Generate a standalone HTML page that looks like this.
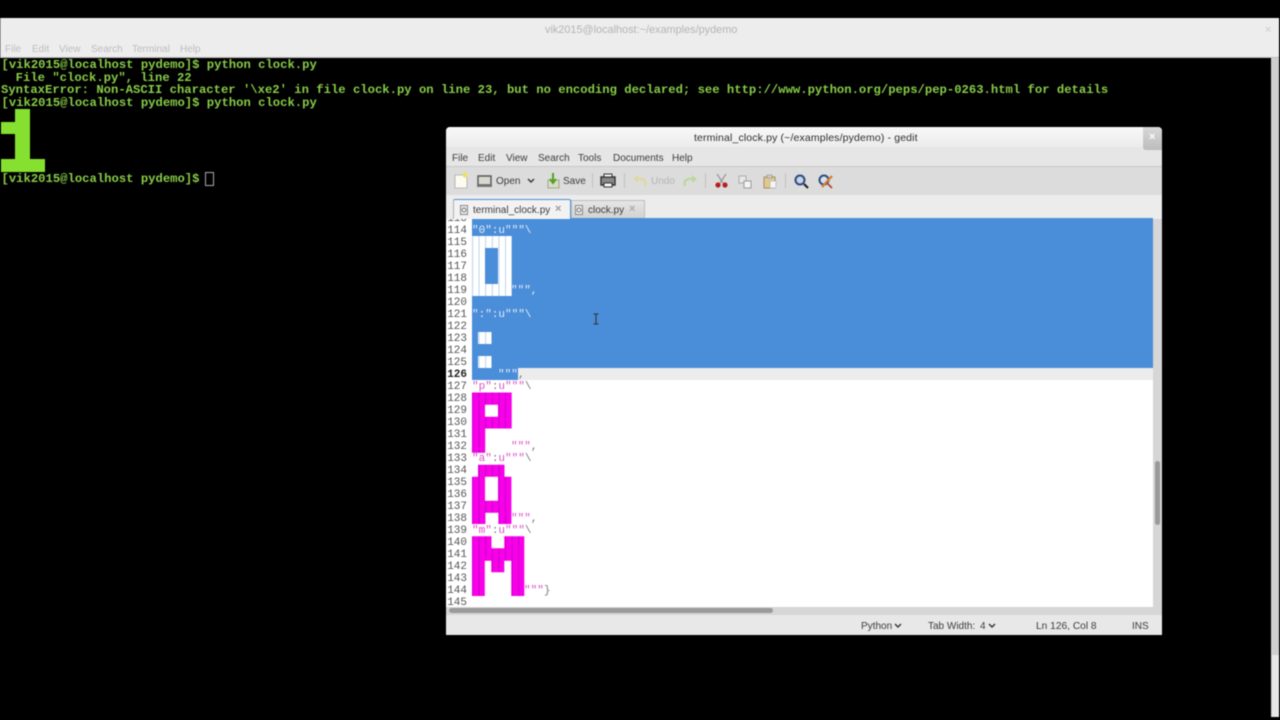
<!DOCTYPE html>
<html><head><meta charset="utf-8"><style>
html,body{margin:0;padding:0;background:#000;width:1280px;height:720px;overflow:hidden}
#r{position:relative;width:1280px;height:720px;overflow:hidden;filter:blur(.45px)}
.a{position:absolute}
.t{position:absolute;white-space:pre;font:bold 12.22px/13px "Liberation Mono",monospace;color:#88cc48;left:1px}
.s{position:absolute;white-space:pre;font:10px/14px "Liberation Sans",sans-serif;color:#3c3c3c}
.n{position:absolute;left:446px;width:21px;text-align:right;font:11px/12px "Liberation Mono",monospace;color:#555}
.c{position:absolute;white-space:pre;font:11px/12px "Liberation Mono",monospace;color:#dc50c8}
.w{color:#e4eefa}.g{color:#777}
</style></head><body><div id="r">
<div class="a" style="left:0;top:18px;width:1279px;height:39px;background:#ededed;border-left:1px solid #ccc;box-sizing:border-box"></div>
<div class="a" style="left:1271px;top:57px;width:8px;height:660px;background:#cfcfcf"></div>
<div class="a" style="left:1272px;top:655px;width:7px;height:62px;background:#e8e8e8"></div>
<div class="a" style="left:0;top:57px;width:1279px;height:1px;background:#bbb"></div>
<div class="s" style="left:545px;top:23px;color:#b4b4b4;font-size:10.9px">vik2015@localhost:~/examples/pydemo</div>
<div class="s" style="left:1265px;top:23px;color:#d4d4d4;font-weight:bold;font-size:11px">×</div>
<div class="s" style="left:5px;top:43px;color:#bdbdbd">File</div>
<div class="s" style="left:32px;top:43px;color:#bdbdbd">Edit</div>
<div class="s" style="left:59px;top:43px;color:#bdbdbd">View</div>
<div class="s" style="left:91px;top:43px;color:#bdbdbd">Search</div>
<div class="s" style="left:132px;top:43px;color:#bdbdbd">Terminal</div>
<div class="s" style="left:180px;top:43px;color:#bdbdbd">Help</div>

<div class="t" style="left:1.5px;top:59px">[vik2015@localhost pydemo]$ python clock.py</div>
<div class="t" style="top:72px">  File "clock.py", line 22</div>
<div class="t" style="top:84px">SyntaxError: Non-ASCII character '\xe2' in file clock.py on line 23, but no encoding declared; see http://www.python.org/peps/pep-0263.html for details</div>
<div class="t" style="left:1.5px;top:97px">[vik2015@localhost pydemo]$ python clock.py</div>
<div class="t" style="left:1.5px;top:173px">[vik2015@localhost pydemo]$</div>
<div class="a" style="left:15px;top:109px;width:15px;height:63px;background:#85e030"></div>
<div class="a" style="left:1px;top:122px;width:14px;height:12px;background:#85e030"></div>
<div class="a" style="left:1px;top:159px;width:44px;height:13px;background:#85e030"></div>
<div class="a" style="left:205px;top:172px;width:7px;height:12px;border:1px solid #aaa"></div>

<!-- gedit window -->
<div class="a" style="left:446px;top:127px;width:716px;height:508px;background:#e8e8e8;border-radius:4px 4px 0 0;overflow:hidden">
 <div class="a" style="left:0;top:0;width:716px;height:20px;background:linear-gradient(#f8f8f8,#ececec)"></div>
 <div class="a" style="left:0;top:20px;width:716px;height:19px;background:#e6e6e6"></div>
 <div class="a" style="left:0;top:39px;width:716px;height:29px;background:#dcdcdc;border-top:1px solid #c8c8c8;box-sizing:border-box"></div>
 <div class="a" style="left:0;top:68px;width:716px;height:24px;background:#ececec"></div>
 <div class="a" style="left:697px;top:0;width:19px;height:23px;background:linear-gradient(#d8d8d8,#bcbcbc);border-radius:0 4px 0 3px"></div>
 <div class="a" style="left:0;top:480px;width:716px;height:8px;background:#d6d6d6"></div>
 <div class="a" style="left:3px;top:481px;width:324px;height:5px;background:#9a9a9a;border-radius:3px"></div>
 <div class="a" style="left:707px;top:92px;width:9px;height:396px;background:#d6d6d6"></div>
 <div class="a" style="left:709px;top:334px;width:5px;height:64px;background:#9a9a9a;border-radius:3px"></div>
 <div class="a" style="left:0;top:488px;width:716px;height:20px;background:#e8e8e8"></div>
</div>
<div class="a" style="left:1149px;top:131px;font:bold 11px/12px 'Liberation Sans',sans-serif;color:#fff">×</div>
<div class="s" style="left:694px;top:131px;font-size:10.5px;color:#2e2e2e;letter-spacing:.14px">terminal_clock.py (~/examples/pydemo) - gedit</div>
<div class="s" style="left:452px;top:151.5px">File</div>
<div class="s" style="left:478px;top:151.5px">Edit</div>
<div class="s" style="left:506px;top:151.5px">View</div>
<div class="s" style="left:538px;top:151.5px">Search</div>
<div class="s" style="left:578px;top:151.5px">Tools</div>
<div class="s" style="left:613px;top:151.5px">Documents</div>
<div class="s" style="left:672px;top:151.5px">Help</div>

<!-- toolbar -->
<div class="s" style="left:496px;top:175px">Open</div>
<div class="s" style="left:563px;top:175px">Save</div>
<div class="s" style="left:651px;top:175px;color:#b5b5b5">Undo</div>
<svg class="a" style="left:446px;top:166px" width="400" height="30" viewBox="446 166 400 30">
 <path d="M455 175h9l3 3v10h-12z" fill="#fbfbf0" stroke="#aaa" stroke-width=".8"/><circle cx="465" cy="175" r="2.5" fill="#f0e060"/>
 <path d="M478 176h13v9h-13z" fill="#d8d8d0" stroke="#555" stroke-width="1.4"/><path d="M477 185h15v2h-15z" fill="#777"/>
 <path d="M528 179l3 3 3-3" fill="none" stroke="#333" stroke-width="1.4"/>
 <path d="M548 180h11v8h-11z" fill="#d8dcc8" stroke="#8a9a70" stroke-width=".8"/><path d="M553 173v9M550 179l3 4 3-4" fill="none" stroke="#55a020" stroke-width="2"/>
 <path d="M592.500 173v15M624.500 173v15M705.500 173v15M785.500 173v15" stroke="#c0c0c0"/>
 <path d="M601 177h14v8h-14z" fill="#888" stroke="#333" stroke-width="1.4"/><path d="M604 174h8v3h-8zM604 183h8v4h-8z" fill="#f4f4f4" stroke="#333"/>
 <path d="M645 186c2-6-3-8-8-7" fill="none" stroke="#e0d8a0" stroke-width="2.4"/><path d="M638 175l-5 4 5 4z" fill="#e0d8a0"/>
 <path d="M685 186c-2-6 3-8 8-7" fill="none" stroke="#bcd8a0" stroke-width="2.4"/><path d="M692 175l5 4-5 4z" fill="#bcd8a0"/>
 <path d="M717 174l6 9M726 174l-6 9" stroke="#999" stroke-width="1.3"/><circle cx="718" cy="185" r="2.600" fill="#b82020"/><circle cx="725" cy="185" r="2.600" fill="#b82020"/>
 <path d="M739 176h7v7h-7z" fill="#e8e8e8" stroke="#aaa"/><path d="M744 181h7v7h-7z" fill="#f4f4f4" stroke="#999"/>
 <path d="M764 177h11v11h-11z" fill="#e0c890" stroke="#a89060"/><path d="M767 175h5v3h-5z" fill="#ccc" stroke="#888" stroke-width=".6"/><path d="M770 181h6v7h-6z" fill="#f4f4f4" stroke="#aaa" stroke-width=".6"/>
 <circle cx="800" cy="180" r="4.500" fill="#c8d4e8" stroke="#2c4a80" stroke-width="2"/><path d="M804 184l4 4" stroke="#222" stroke-width="2.2"/>
 <circle cx="824" cy="180" r="4.500" fill="#d8e0ec" stroke="#2c4a80" stroke-width="2"/><path d="M822 187l10-11" stroke="#d88030" stroke-width="2.400"/><path d="M828 184l4 4" stroke="#b04020" stroke-width="1.600"/>
</svg>

<!-- tabs -->
<div class="a" style="left:571px;top:200px;width:74px;height:18px;background:linear-gradient(#e6e6e6,#d2d2d2);border:1px solid #bdbdbd;border-bottom:0;box-sizing:border-box"></div>
<div class="a" style="left:453px;top:199px;width:118px;height:20px;background:#f2f2f2;border-top:1px solid #4a90d9;border-left:1px solid #b0b0b0;border-right:1px solid #4a90d9;box-sizing:border-box;border-radius:2px 2px 0 0"></div>
<svg class="a" style="left:459px;top:204px" width="130" height="13" viewBox="459 203 130 13">
 <path d="M460.500 204.500h7v9h-7zM575.500 204.500h7v9h-7z" fill="#eee" stroke="#888"/><circle cx="464" cy="209" r="2" fill="none" stroke="#777"/><circle cx="579" cy="209" r="2" fill="none" stroke="#777"/>
</svg>
<div class="s" style="left:473px;top:204px">terminal_clock.py</div>
<div class="s" style="left:588px;top:204px">clock.py</div>
<div class="s" style="left:555px;top:202px;color:#999;font-weight:bold;font-size:11px">×</div>
<div class="s" style="left:629px;top:202px;color:#aaa;font-weight:bold;font-size:11px">×</div>

<!-- editor -->
<div class="a" style="left:446px;top:219px;width:707px;height:388px;background:#fff;overflow:hidden"></div>
<div class="a" style="left:571px;top:218px;width:582px;height:1px;background:#4a90d9"></div>
<div class="a" style="left:472px;top:219px;width:681px;height:149px;background:#4a8dd8"></div>
<div class="a" style="left:472px;top:368px;width:46px;height:12px;background:#4a8dd8"></div>
<div class="a" style="left:518px;top:368px;width:635px;height:12px;background:#ececec"></div>

<svg class="a" style="left:0;top:0" width="1280" height="720">
 <defs>
  <pattern id="m" width="6.62" height="12" patternUnits="userSpaceOnUse" x="472" y="0"><rect width="6.62" height="12" fill="#f800e8"/><rect width=".9" height="12" fill="#c400c8"/></pattern>
  <pattern id="k" width="6.62" height="12" patternUnits="userSpaceOnUse" x="472" y="0"><rect width="6.62" height="12" fill="#fff"/><rect width=".9" height="12" fill="#b4d0ee"/></pattern>
 </defs>
 <path fill="url(#k)" fill-rule="evenodd" d="M472 236h39.700v60H472zM485 248v36h13v-36z"/>
 <path fill="url(#k)" d="M478 332h13.500v12H478zM478 356h13.500v12H478z"/>
 <path fill="url(#m)" fill-rule="evenodd" d="M472 392.500h39.700v36h-26.500v24.300H472zM485 404.700v12h13v-12z"/>
 <path fill="url(#m)" d="M478 464.700h26.500v12h6.900v47.300h-13v-11.300h-13v11.300H472v-47.300h6zM485 476.700v24h13v-24z" fill-rule="evenodd"/>
 <path fill="url(#m)" d="M472 536.300h19.500v12h12.800v-12h20v59.700h-13v-35.300h-7v11.500h-13v-11.500h-6.500v35.300H472z"/>
 <path d="M593.500 314h2.500M598.500 314h-2.500M596 314v10M593.500 324h2.500M598.500 324h-2.500" stroke="#333" fill="none" stroke-width="1.100"/>
</svg>

<div style="position:absolute;left:0;top:219px;width:470px;height:388px;overflow:hidden">
<div class="n" style="top:-6px">113</div>
<div class="n" style="top:6px">114</div>
<div class="n" style="top:18px">115</div>
<div class="n" style="top:30px">116</div>
<div class="n" style="top:42px">117</div>
<div class="n" style="top:54px">118</div>
<div class="n" style="top:66px">119</div>
<div class="n" style="top:78px">120</div>
<div class="n" style="top:90px">121</div>
<div class="n" style="top:102px">122</div>
<div class="n" style="top:114px">123</div>
<div class="n" style="top:126px">124</div>
<div class="n" style="top:138px">125</div>
<div class="n" style="top:150px;font-weight:bold;color:#222">126</div>
<div class="n" style="top:162px">127</div>
<div class="n" style="top:174px">128</div>
<div class="n" style="top:186px">129</div>
<div class="n" style="top:198px">130</div>
<div class="n" style="top:210px">131</div>
<div class="n" style="top:222px">132</div>
<div class="n" style="top:234px">133</div>
<div class="n" style="top:246px">134</div>
<div class="n" style="top:258px">135</div>
<div class="n" style="top:270px">136</div>
<div class="n" style="top:282px">137</div>
<div class="n" style="top:294px">138</div>
<div class="n" style="top:306px">139</div>
<div class="n" style="top:318px">140</div>
<div class="n" style="top:330px">141</div>
<div class="n" style="top:342px">142</div>
<div class="n" style="top:354px">143</div>
<div class="n" style="top:366px">144</div>
<div class="n" style="top:378px">145</div>
</div>
<div class="c w" style="left:472px;top:225px">"0":u"""\</div>
<div class="c w" style="left:511px;top:285px">""",</div>
<div class="c w" style="left:472px;top:309px">":":u"""\</div>
<div class="c w" style="left:498px;top:369px">"""</div>
<div class="c g" style="left:518px;top:369px">,</div>
<div class="c" style="left:472px;top:381px">"p"<span class="g">:</span>u"""<span class="g">\</span></div>
<div class="c" style="left:511px;top:441px">"""<span class="g">,</span></div>
<div class="c" style="left:472px;top:453px">"a"<span class="g">:</span>u"""<span class="g">\</span></div>
<div class="c" style="left:511px;top:513px">"""<span class="g">,</span></div>
<div class="c" style="left:472px;top:525px">"m"<span class="g">:</span>u"""<span class="g">\</span></div>
<div class="c" style="left:524px;top:585px">"""<span class="g">}</span></div>

<!-- status -->
<div class="s" style="left:861px;top:620px">Python</div>
<div class="s" style="left:928px;top:620px">Tab Width:</div>
<div class="s" style="left:980px;top:620px">4</div>
<div class="s" style="left:1036px;top:620px;font-size:10.2px">Ln 126, Col 8</div>
<div class="s" style="left:1132px;top:620px">INS</div>
<svg class="a" style="left:890px;top:619px" width="110" height="14"><path d="M5 5l3 3 3-3M99 5l3 3 3-3" fill="none" stroke="#333" stroke-width="1.400"/></svg>
</div></body></html>
